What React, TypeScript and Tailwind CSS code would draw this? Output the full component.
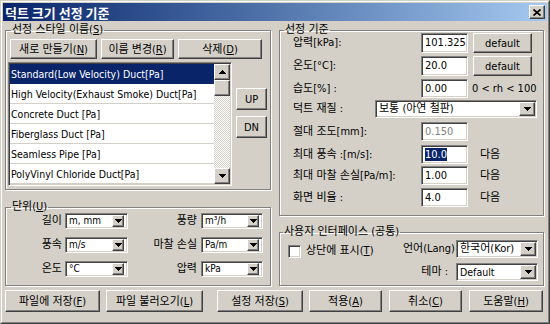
import React from 'react';

const raised =
  'border border-t-white border-l-white border-r-[#404040] border-b-[#404040] shadow-[inset_-1px_-1px_0_#808080] bg-[#d4d0c8]';
const sunken =
  'border border-t-[#808080] border-l-[#808080] border-r-white border-b-white shadow-[inset_1px_1px_0_#404040,inset_-1px_-1px_0_#d4d0c8]';
const etched = 'border border-[#808080] shadow-[inset_1px_1px_0_#fff,1px_1px_0_#fff]';

const STYLES = [
  'Standard(Low Velocity) Duct[Pa]',
  'High Velocity(Exhaust Smoke) Duct[Pa]',
  'Concrete Duct [Pa]',
  'Fiberglass Duct [Pa]',
  'Seamless Pipe [Pa]',
  'PolyVinyl Chloride Duct[Pa]',
];

const Arrow: React.FC<{ up?: boolean }> = ({ up }) => (
  <svg width="7" height="4" viewBox="0 0 7 4" className={up ? 'rotate-180' : ''} shapeRendering="crispEdges">
    <path d="M0 0h7v1h-1v1h-1v1h-1v1h-1v-1h-1v-1h-1v-1h-1z" fill="#000" />
  </svg>
);

const Btn: React.FC<{ className?: string; children: React.ReactNode }> = ({ className = '', children }) => (
  <button type="button" className={`${raised} flex items-center justify-center leading-none ${className}`}>
    {children}
  </button>
);

const Field: React.FC<{ value: string; selected?: boolean; disabled?: boolean }> = ({ value, selected, disabled }) => (
  <div
    className={`${sunken} bg-white w-[47px] h-full flex items-center pl-[3px] text-[11px] ${
      disabled ? 'text-[#808080]' : ''
    }`}
  >
    {selected ? <span className="bg-[#0a246a] text-white leading-[13px]">{value}</span> : value}
  </div>
);

const Combo: React.FC<{ value: string; className?: string; small?: boolean }> = ({ value, className = '', small }) => (
  <div className={`${sunken} bg-white flex items-center p-px ${className}`}>
    <span className={`flex-1 pl-[2px] whitespace-nowrap overflow-hidden ${small ? 'text-[10px]' : ''}`}>{value}</span>
    <div
      className={`${raised} h-full flex items-center justify-center ${small ? 'w-[12px] mr-[2px]' : 'w-[16px]'}`}
    >
      <Arrow />
    </div>
  </div>
);

const Mn: React.FC<{ children: React.ReactNode }> = ({ children }) => <u className="underline-offset-1">{children}</u>;

const UnitRow: React.FC<{ l1: string; v1: string; l2: string; v2: string }> = ({ l1, v1, l2, v2 }) => (
  <div className="flex items-center h-[16px]">
    <span className="w-[56px] text-right">{l1}</span>
    <Combo small value={v1} className="ml-[3px] w-[63px] h-[16px]" />
    <span className="w-[69px] text-right">{l2}</span>
    <Combo small value={v2} className="ml-[4px] w-[62px] h-[16px]" />
  </div>
);

export default function App() {
  return (
    <div className="w-[550px] h-[324px] bg-[#d4d0c8] border border-t-[#d4d0c8] border-l-[#d4d0c8] border-r-[#404040] border-b-[#404040] text-black text-[11px] leading-[14px] font-['DejaVu_Sans_Condensed','Liberation_Sans','Noto_Sans_CJK_KR',sans-serif] select-none">
      <div className="h-full border border-t-white border-l-white border-r-[#808080] border-b-[#808080] p-px flex flex-col">
        {/* title bar */}
        <div className="h-[18px] shrink-0 flex items-center bg-linear-to-r from-[#0a246a] to-[#a6caf0] pl-[2px] pr-[2px]">
          <span className="text-white font-bold text-[13px] leading-none font-['Noto_Sans_CJK_KR',sans-serif]">
            덕트 크기 선정 기준
          </span>
          <div className={`ml-auto w-[16px] h-[14px] ${raised} flex items-center justify-center`}>
            <svg width="8" height="7" viewBox="0 0 8 7">
              <path d="M0.5 0.5L7.5 6.5M7.5 0.5L0.5 6.5" stroke="#000" strokeWidth="1.7" />
            </svg>
          </div>
        </div>

        <div className="flex ml-[2px] mr-[3px]">
          {/* left column */}
          <div className="w-[266px] flex flex-col">
            <fieldset className={`${etched} mt-[3px] pb-[3px]`}>
              <legend className="ml-[5px] px-px leading-[12px]">
                선정 스타일 이름(<Mn>S</Mn>)
              </legend>
              <div className="flex gap-[4px] mt-[3px] pl-[4px]">
                <Btn className="w-[87px] h-[20px]">
                  새로 만들기(<Mn>N</Mn>)
                </Btn>
                <Btn className="w-[73px] h-[20px]">
                  이름 변경(<Mn>R</Mn>)
                </Btn>
                <Btn className="w-[84px] h-[20px]">
                  삭제(<Mn>D</Mn>)
                </Btn>
              </div>
              <div className="flex gap-[4px] mt-[3px] pl-[2px]">
                <div className={`${sunken} bg-white w-[224px] h-[124px] p-px flex`}>
                  <div className="flex-1 flex flex-col text-[10.5px]">
                    {STYLES.map((s, i) => (
                      <div
                        key={s}
                        className={`h-[20px] flex items-center pl-[1px] border-b whitespace-nowrap overflow-hidden ${
                          i === 0 ? 'bg-[#0a246a] text-white border-[#0a246a]' : 'border-[#d4d0c8]'
                        }`}
                      >
                        {s}
                      </div>
                    ))}
                  </div>
                  <div className="w-[16px] flex flex-col">
                    <div className={`${raised} h-[16px] flex items-center justify-center`}>
                      <Arrow up />
                    </div>
                    <div className={`${raised} h-[16px]`} />
                    <div className="flex-1 bg-[repeating-conic-gradient(#fff_0%_25%,#d4d0c8_0%_50%)] bg-[length:2px_2px]" />
                    <div className={`${raised} h-[16px] flex items-center justify-center`}>
                      <Arrow />
                    </div>
                  </div>
                </div>
                <div className="flex flex-col gap-[6px] pt-[26px]">
                  <Btn className="w-[31px] h-[22px]">UP</Btn>
                  <Btn className="w-[31px] h-[22px]">DN</Btn>
                </div>
              </div>
            </fieldset>

            <fieldset className={`${etched} mt-[11px] pb-[8px]`}>
              <legend className="ml-[5px] px-px leading-[12px]">
                단위(<Mn>U</Mn>)
              </legend>
              <div className="flex flex-col gap-[8px]">
                <UnitRow l1="길이" v1="m, mm" l2="풍량" v2="m³/h" />
                <UnitRow l1="풍속" v1="m/s" l2="마찰 손실" v2="Pa/m" />
                <UnitRow l1="온도" v1="°C" l2="압력" v2="kPa" />
              </div>
            </fieldset>
          </div>

          {/* right column */}
          <div className="w-[265px] ml-[8px] flex flex-col">
            <fieldset className={`${etched} mt-[3px] pb-[8px] pl-[13px]`}>
              <legend className="ml-[-9px] px-px leading-[12px]">선정 기준</legend>
              <div className="flex items-center h-[20px] mt-[-3px]">
                <span className="w-[128px]">압력[kPa]:</span>
                <Field value="101.325" />
                <Btn className="ml-[5px] w-[59px] h-[20px]">default</Btn>
              </div>
              <div className="flex items-center h-[20px] mt-[3px]">
                <span className="w-[128px]">온도[°C]:</span>
                <Field value="20.0" />
                <Btn className="ml-[5px] w-[59px] h-[20px]">default</Btn>
              </div>
              <div className="flex items-center h-[19px] mt-[3px]">
                <span className="w-[128px]">습도[%] :</span>
                <Field value="0.00" />
                <span className="ml-[4px]">0 &lt; rh &lt; 100</span>
              </div>
              <div className="flex items-center h-[18px] mt-[2px]">
                <span className="w-[82px]">덕트 재질 :</span>
                <Combo value="보통 (아연 철판)" className="w-[162px] h-[18px]" />
              </div>
              <div className="flex items-center h-[19px] mt-[4px]">
                <span className="w-[128px]">절대 조도[mm]:</span>
                <Field value="0.150" disabled />
              </div>
              <div className="flex items-center h-[19px] mt-[4px]">
                <span className="w-[128px]">최대 풍속 :[m/s]:</span>
                <Field value="10.0" selected />
                <span className="ml-[12px]">다음</span>
              </div>
              <div className="flex items-center h-[19px] mt-[2px]">
                <span className="w-[128px]">최대 마찰 손실[Pa/m]:</span>
                <Field value="1.00" />
                <span className="ml-[12px]">다음</span>
              </div>
              <div className="flex items-center h-[19px] mt-[3px]">
                <span className="w-[128px]">화면 비율 :</span>
                <Field value="4.0" />
                <span className="ml-[12px]">다음</span>
              </div>
            </fieldset>

            <fieldset className={`${etched} mt-[10px] pb-[4px] pr-[5px]`}>
              <legend className="ml-[3px] px-px leading-[12px]">사용자 인터페이스 (공통)</legend>
              <div className="flex items-center h-[18px] mt-[2px]">
                <div className="flex items-center ml-[8px] mt-[4px]">
                  <div className={`${sunken} bg-white w-[13px] h-[13px]`} />
                  <span className="ml-[5px]">
                    상단에 표시(<Mn>T</Mn>)
                  </span>
                </div>
                <span className="ml-auto mr-[1px]">언어(Lang)</span>
                <Combo value="한국어(Kor)" className="w-[82px] h-[18px]" />
              </div>
              <div className="flex items-center justify-end h-[18px] mt-[5px]">
                <span className="mr-[8px]">테마 :</span>
                <Combo value="Default" className="w-[82px] h-[18px] text-[10.5px]" />
              </div>
            </fieldset>
          </div>
        </div>

        {/* bottom buttons */}
        <div className="flex mt-[4px] ml-[2px]">
          <Btn className="w-[95px] h-[22px]">
            파일에 저장(<Mn>F</Mn>)
          </Btn>
          <Btn className="ml-[6px] w-[97px] h-[22px]">
            파일 불러오기(<Mn>L</Mn>)
          </Btn>
          <Btn className="ml-[14px] w-[86px] h-[22px]">
            설정 저장(<Mn>S</Mn>)
          </Btn>
          <Btn className="ml-[6px] w-[73px] h-[22px]">
            적용(<Mn>A</Mn>)
          </Btn>
          <Btn className="ml-[7px] w-[73px] h-[22px]">
            취소(<Mn>C</Mn>)
          </Btn>
          <Btn className="ml-[7px] w-[74px] h-[22px]">
            도움말(<Mn>H</Mn>)
          </Btn>
        </div>
      </div>
    </div>
  );
}
